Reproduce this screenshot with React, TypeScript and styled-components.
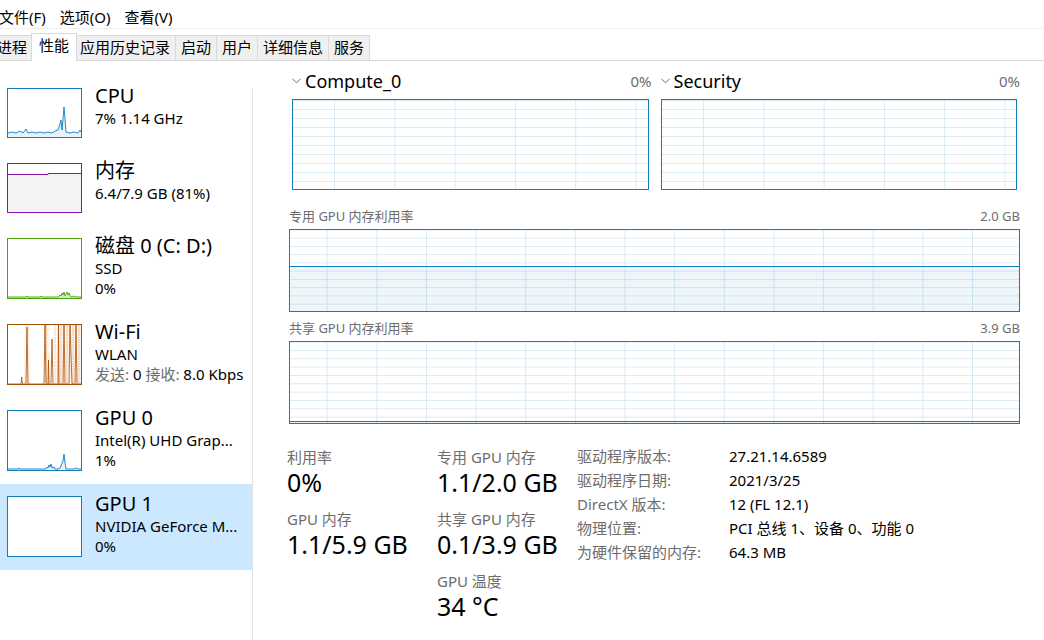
import React from 'react';
import styled, { createGlobalStyle } from 'styled-components';

const palette = {
  blue: '#117dbb',
  grid: '#d9eaf4',
  gray: '#6d6d6d',
  line: '#d9d9d9',
  tab: '#f0f0f0',
  select: '#cce8ff',
  purple: '#8b12ae',
  green: '#4da60c',
  orange: '#a74f01',
};

const GlobalStyle = createGlobalStyle`
  html, body {
    margin: 0;
    padding: 0;
    background: #fff;
  }
  body {
    font-family: "Noto Sans", "Noto Sans CJK SC", sans-serif;
    color: #000;
  }
`;

function CpuGraph() {
  const pts =
    '0,44 4,43 8,44 12,42 15,44 18,40 20,44 24,43 28,44 32,43 36,44 40,43 44,44 47,42 50,41 52,35 53,31 54,41 55,30 56,18 57,30 58,43 62,44 66,43 70,44 72,41 73,43';
  return (
    <svg width="100%" height="100%" viewBox="0 0 73 48" preserveAspectRatio="none">
      <polygon points={`0,48 ${pts} 73,48`} fill="rgba(17,125,187,0.1)" />
      <polyline points={pts} fill="none" stroke={palette.blue} strokeWidth="0.9" />
    </svg>
  );
}

function MemGraph() {
  return (
    <svg width="100%" height="100%" viewBox="0 0 73 48" preserveAspectRatio="none">
      <polygon points="0,10.5 40,10.5 40,9.5 73,9.5 73,48 0,48" fill="#f3f2f5" />
      <polyline points="0,10.5 40,10.5 40,9.5 73,9.5" fill="none" stroke={palette.purple} strokeWidth="1" />
    </svg>
  );
}

function DiskGraph() {
  const pts =
    '0,58 18,58 19,57 20,58 32,58 33,57 34,58 50,58 52,56 53,57 54,54 55,56 56,53 57,57 58,55 59,53 60,56 61,54 62,57 64,58 66,57 68,58 73,58';
  return (
    <svg width="100%" height="100%" viewBox="0 0 73 59" preserveAspectRatio="none">
      <polygon points={`0,59 ${pts} 73,59`} fill="rgba(77,166,12,0.25)" />
      <polyline points={pts} fill="none" stroke={palette.green} strokeWidth="0.9" />
    </svg>
  );
}

function WifiGraph() {
  const solid =
    '0,59 13,59 13.7,52 14.5,59 18,59 19,2 20,59 36,59 37,0 38,59 40,59 40.5,35 41,59 43,59 44,14 45,59 50,59 50.5,0 51,59 55,59 56,0 57,59 61,59 62,0 63,30 64,59 67,59 68,0 69,59 73,59';
  return (
    <svg width="100%" height="100%" viewBox="0 0 73 59" preserveAspectRatio="none">
      <polygon
        points="0,59 16,59 17,0 22,0 23,59 36,59 37,0 41,0 42,59 48,59 49,0 73,0 73,59"
        fill="#fdf3eb"
      />
      {[38.5, 47, 53, 59, 65, 71].map(x => (
        <line key={x} x1={x} y1="0" x2={x} y2="59" stroke="#e8874a" strokeWidth="0.7" strokeDasharray="1.2 1.2" />
      ))}
      <polyline points={solid} fill="none" stroke={palette.orange} strokeWidth="0.8" />
    </svg>
  );
}

function Gpu0Graph() {
  const pts =
    '0,58 10,58 11,57 12,58 30,58 38,58 39,56 40,57 41,54 42,56 43,53 44,57 46,56 47,58 50,58 52,57 55,50 56,43 57,52 58,58 66,58 68,57 70,58 73,58';
  return (
    <svg width="100%" height="100%" viewBox="0 0 73 59" preserveAspectRatio="none">
      <polygon points={`0,59 ${pts} 73,59`} fill="rgba(17,125,187,0.1)" />
      <polyline points={pts} fill="none" stroke={palette.blue} strokeWidth="0.9" />
    </svg>
  );
}

function Chevron() {
  return (
    <svg width="9" height="6" viewBox="0 0 9 6">
      <polyline points="0.5,0.8 4.5,4.8 8.5,0.8" fill="none" stroke="#6d6d6d" strokeWidth="1" />
    </svg>
  );
}

const Window = styled.div`
  width: 1044px;
  height: 640px;
  overflow: hidden;
  display: flex;
  flex-direction: column;
  background: #fff;
`;

const MenuBar = styled.div`
  height: 29px;
  box-sizing: border-box;
  padding-top: 6px;
  margin-left: -1px;
  display: flex;
  gap: 14px;
  border-bottom: 1px solid #f0f0f0;
`;

const MenuItem = styled.span`
  font-size: 15px;
  line-height: 22px;
`;

const TabStrip = styled.div`
  height: 32px;
  box-sizing: border-box;
  margin-left: -8px;
  display: flex;
  align-items: flex-end;
  border-bottom: 1px solid ${palette.line};
`;

const Tab = styled.div<{ $active?: boolean }>`
  box-sizing: border-box;
  height: ${p => (p.$active ? 28 : 25)}px;
  padding: 0 ${p => (p.$active ? 7 : 5)}px;
  margin: ${p => (p.$active ? '0 -2px -1px -2px' : '0 0 0 -1px')};
  border: 1px solid ${palette.line};
  border-bottom: none;
  background: ${p => (p.$active ? '#fff' : palette.tab)};
  font-size: 15px;
  line-height: 23px;
  white-space: nowrap;
  position: relative;
  z-index: ${p => (p.$active ? 1 : 0)};
`;

const Body = styled.div`
  flex: 1;
  min-height: 0;
  display: flex;
`;

const Sidebar = styled.div`
  width: 253px;
  flex-shrink: 0;
  padding-top: 15px;
  box-sizing: border-box;
  position: relative;

  &::after {
    content: '';
    position: absolute;
    top: 28px;
    bottom: 0;
    right: 0;
    width: 1px;
    background: #e3e3e3;
  }
`;

const SideItem = styled.div<{ $selected?: boolean }>`
  display: flex;
  gap: 13px;
  width: 252px;
  box-sizing: border-box;
  padding: 12px 0 13px 7px;
  background: ${p => (p.$selected ? palette.select : 'transparent')};
  position: relative;
  z-index: 1;
`;

const Thumb = styled.div<{ $color: string; $h: number }>`
  width: 75px;
  height: ${p => p.$h}px;
  flex-shrink: 0;
  box-sizing: border-box;
  border: 1px solid ${p => p.$color};
  background: #fff;
  display: flex;

  svg {
    display: block;
  }
`;

const ItemText = styled.div`
  margin-top: -4px;
  min-width: 0;
  white-space: nowrap;
`;

const ItemTitle = styled.div`
  font-size: 20px;
  line-height: 24px;
`;

const ItemSub = styled.div`
  font-size: 15px;
  line-height: 20px;
`;

const Dim = styled.span`
  color: ${palette.gray};
`;

const Main = styled.div`
  flex: 1;
  min-width: 0;
  padding: 8px 24px 0 36px;
  display: flex;
  flex-direction: column;
`;

const EngineRow = styled.div`
  display: grid;
  grid-template-columns: 1fr 1fr;
  column-gap: 9px;
  margin-left: 3px;
`;

const EngineHeader = styled.div`
  height: 24px;
  margin-bottom: 6px;
  display: flex;
  align-items: center;

  svg {
    margin-right: 4px;
    flex-shrink: 0;
  }
`;

const EngineTitle = styled.span`
  font-size: 18px;
  line-height: 24px;
`;

const Percent = styled.span`
  margin-left: auto;
  font-size: 15px;
  color: ${palette.gray};
`;

const Chart = styled.div<{ $h: number; $cw: number; $ch: number; $ox: number; $oy: number }>`
  height: ${p => p.$h}px;
  box-sizing: border-box;
  border: 1px solid ${palette.blue};
  background-color: #fff;
  background-image: linear-gradient(to right, ${palette.grid} 1px, transparent 1px),
    linear-gradient(to bottom, ${palette.grid} 1px, transparent 1px);
  background-size: ${p => p.$cw}px 100%, 100% ${p => p.$ch}px;
  background-position: ${p => p.$ox}px 0, 0 ${p => p.$oy}px;
  display: flex;
  flex-direction: column;
  justify-content: flex-end;
`;

const EngineChart = styled(Chart)`
  margin-right: 3px;
`;

const Fill = styled.div<{ $pct: number }>`
  height: ${p => p.$pct}%;
  box-sizing: border-box;
  border-top: 1px solid ${palette.blue};
  background: rgba(17, 125, 187, 0.07);
`;

const ChartLabel = styled.div<{ $gap: number }>`
  margin-top: ${p => p.$gap}px;
  margin-bottom: 4px;
  display: flex;
  justify-content: space-between;
  font-size: 13px;
  line-height: 18px;
  color: ${palette.gray};
`;

const Stats = styled.div`
  margin: 23px 0 0 -2px;
  display: flex;
  align-items: flex-start;
`;

const StatColumn = styled.div<{ $w: number }>`
  width: ${p => p.$w}px;
  flex-shrink: 0;
`;

const Stat = styled.div`
  margin-bottom: 11px;
`;

const StatLabel = styled.div`
  font-size: 15px;
  line-height: 20px;
  color: ${palette.gray};
`;

const StatValue = styled.div`
  font-size: 25px;
  line-height: 31px;
  white-space: nowrap;
`;

const InfoTable = styled.div`
  margin-top: -3px;
  display: grid;
  grid-template-columns: 152px auto;
  grid-auto-rows: 24px;
  font-size: 15px;
  line-height: 24px;
  white-space: nowrap;
`;

const InfoKey = styled.div`
  color: ${palette.gray};
`;

const InfoValue = styled.div`
  color: #000;
`;

type SideEntry = {
  title: string;
  lines: React.ReactNode[];
  color: string;
  h: number;
  graph?: React.ReactNode;
  selected?: boolean;
};

const sideItems: SideEntry[] = [
  { title: 'CPU', lines: ['7% 1.14 GHz'], color: palette.blue, h: 50, graph: <CpuGraph /> },
  { title: '内存', lines: ['6.4/7.9 GB (81%)'], color: palette.purple, h: 50, graph: <MemGraph /> },
  { title: '磁盘 0 (C: D:)', lines: ['SSD', '0%'], color: palette.green, h: 61, graph: <DiskGraph /> },
  {
    title: 'Wi-Fi',
    lines: [
      'WLAN',
      <>
        <Dim>发送:</Dim> 0 <Dim>接收:</Dim> 8.0 Kbps
      </>,
    ],
    color: palette.orange,
    h: 61,
    graph: <WifiGraph />,
  },
  { title: 'GPU 0', lines: ['Intel(R) UHD Grap...', '1%'], color: palette.blue, h: 61, graph: <Gpu0Graph /> },
  { title: 'GPU 1', lines: ['NVIDIA GeForce M...', '0%'], color: palette.blue, h: 61, selected: true },
];

const tabs = ['进程', '性能', '应用历史记录', '启动', '用户', '详细信息', '服务'];

const driverInfo: [string, string][] = [
  ['驱动程序版本:', '27.21.14.6589'],
  ['驱动程序日期:', '2021/3/25'],
  ['DirectX 版本:', '12 (FL 12.1)'],
  ['物理位置:', 'PCI 总线 1、设备 0、功能 0'],
  ['为硬件保留的内存:', '64.3 MB'],
];

function App() {
  return (
    <>
      <GlobalStyle />
      <Window>
        <MenuBar>
          <MenuItem>文件(F)</MenuItem>
          <MenuItem>选项(O)</MenuItem>
          <MenuItem>查看(V)</MenuItem>
        </MenuBar>
        <TabStrip>
          {tabs.map(t => (
            <Tab key={t} $active={t === '性能'}>
              {t}
            </Tab>
          ))}
        </TabStrip>
        <Body>
          <Sidebar>
            {sideItems.map(item => (
              <SideItem key={item.title} $selected={item.selected}>
                <Thumb $color={item.color} $h={item.h}>
                  {item.graph}
                </Thumb>
                <ItemText>
                  <ItemTitle>{item.title}</ItemTitle>
                  {item.lines.map((l, i) => (
                    <ItemSub key={i}>{l}</ItemSub>
                  ))}
                </ItemText>
              </SideItem>
            ))}
          </Sidebar>
          <Main>
            <EngineRow>
              {['Compute_0', 'Security'].map(name => (
                <div key={name}>
                  <EngineHeader>
                    <Chevron />
                    <EngineTitle>{name}</EngineTitle>
                    <Percent>0%</Percent>
                  </EngineHeader>
                  <EngineChart $h={91} $cw={60.3} $ch={9} $ox={41} $oy={9} />
                </div>
              ))}
            </EngineRow>

            <ChartLabel $gap={17}>
              <span>专用 GPU 内存利用率</span>
              <span>2.0 GB</span>
            </ChartLabel>
            <Chart $h={83} $cw={49.65} $ch={8.25} $ox={36.7} $oy={7.7}>
              <Fill $pct={55} />
            </Chart>

            <ChartLabel $gap={7}>
              <span>共享 GPU 内存利用率</span>
              <span>3.9 GB</span>
            </ChartLabel>
            <Chart $h={83} $cw={49.65} $ch={8.33} $ox={36.7} $oy={8}>
              <Fill $pct={2.6} />
            </Chart>

            <Stats>
              <StatColumn $w={150}>
                <Stat>
                  <StatLabel>利用率</StatLabel>
                  <StatValue>0%</StatValue>
                </Stat>
                <Stat>
                  <StatLabel>GPU 内存</StatLabel>
                  <StatValue>1.1/5.9 GB</StatValue>
                </Stat>
              </StatColumn>
              <StatColumn $w={140}>
                <Stat>
                  <StatLabel>专用 GPU 内存</StatLabel>
                  <StatValue>1.1/2.0 GB</StatValue>
                </Stat>
                <Stat>
                  <StatLabel>共享 GPU 内存</StatLabel>
                  <StatValue>0.1/3.9 GB</StatValue>
                </Stat>
                <Stat>
                  <StatLabel>GPU 温度</StatLabel>
                  <StatValue>34 °C</StatValue>
                </Stat>
              </StatColumn>
              <InfoTable>
                {driverInfo.map(([k, v]) => (
                  <React.Fragment key={k}>
                    <InfoKey>{k}</InfoKey>
                    <InfoValue>{v}</InfoValue>
                  </React.Fragment>
                ))}
              </InfoTable>
            </Stats>
          </Main>
        </Body>
      </Window>
    </>
  );
}

export default App;
